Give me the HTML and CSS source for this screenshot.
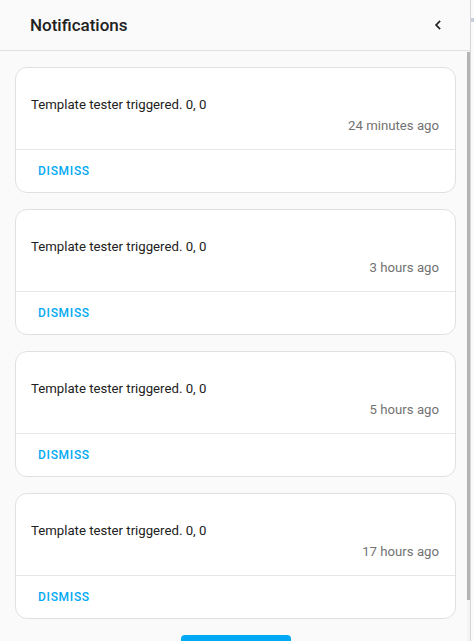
FILE: index.html
```html
<!DOCTYPE html>
<html lang="en">
<head>
<meta charset="utf-8">
<title>Notifications</title>
<link rel="stylesheet" href="styles.css">
</head>
<body>
<div class="drawer">
  <div class="header">
    <div class="title">Notifications</div>
    <button class="close" aria-label="Close">
      <svg viewBox="0 0 24 24" width="18" height="18"><path d="M15.41,16.58L10.83,12L15.41,7.41L14,6L8,12L14,18L15.41,16.58Z" fill="#212121" stroke="#212121" stroke-width="0.4"/></svg>
    </button>
  </div>
  <div class="main">
    <div class="list">
      <div class="card">
        <div class="content">
          <div class="message">Template tester triggered. 0, 0</div>
          <div class="time">24 minutes ago</div>
        </div>
        <div class="actions"><span class="dismiss">DISMISS</span></div>
      </div>
      <div class="card">
        <div class="content">
          <div class="message">Template tester triggered. 0, 0</div>
          <div class="time">3 hours ago</div>
        </div>
        <div class="actions"><span class="dismiss">DISMISS</span></div>
      </div>
      <div class="card">
        <div class="content">
          <div class="message">Template tester triggered. 0, 0</div>
          <div class="time">5 hours ago</div>
        </div>
        <div class="actions"><span class="dismiss">DISMISS</span></div>
      </div>
      <div class="card">
        <div class="content">
          <div class="message">Template tester triggered. 0, 0</div>
          <div class="time">17 hours ago</div>
        </div>
        <div class="actions"><span class="dismiss">DISMISS</span></div>
      </div>
      <div class="footer"><span class="dismiss-all"></span></div>
    </div>
    <div class="scrollbar"><div class="thumb"></div></div>
  </div>
</div>
<div class="outside"><div class="mark"></div></div>
</body>
</html>
```

FILE: styles.css
```css
html, body {
  margin: 0;
  padding: 0;
  height: 641px;
  overflow: hidden;
}
body {
  display: flex;
  font-family: Roboto, "Noto Sans", sans-serif;
  background: #ffffff;
}
.drawer {
  width: 470px;
  height: 641px;
  flex: none;
  display: flex;
  flex-direction: column;
  background: #fafafa;
  border-right: 1px solid #d6d6d6;
}
.header {
  flex: none;
  display: flex;
  align-items: center;
  justify-content: space-between;
  padding: 0 23px 1px 30px;
  border-bottom: 1px solid #e2e2e2;
  box-sizing: border-box;
  height: 51px;
}
.title {
  font-size: 17px;
  font-weight: 500;
  color: #212121;
}
.close {
  border: 0;
  background: none;
  padding: 0;
  width: 18px;
  height: 18px;
  display: flex;
}
.main {
  flex: 1;
  display: flex;
  min-height: 0;
  overflow: hidden;
}
.list {
  flex: 1;
  padding: 16px 11px 0 15px;
  display: flex;
  flex-direction: column;
  gap: 16px;
}
.card {
  flex: none;
  background: #ffffff;
  border: 1px solid #e0e0e0;
  border-radius: 12px;
}
.content {
  padding: 27px 16px 13px 15px;
  border-bottom: 1px solid #e6e6e6;
  font-size: 13.2px;
  line-height: 20px;
}
.message {
  color: #212121;
}
.time {
  margin-top: 1px;
  text-align: right;
  color: #727272;
}
.actions {
  height: 42px;
  display: flex;
  align-items: center;
  padding-left: 22px;
}
.dismiss {
  font-size: 12px;
  font-weight: 500;
  letter-spacing: 0.7px;
  color: #03a9f4;
}
.footer {
  display: flex;
  justify-content: center;
}
.dismiss-all {
  display: block;
  width: 110px;
  height: 36px;
  background: #03a9f4;
  border-radius: 4px;
}
.scrollbar {
  width: 3px;
  flex: none;
  background: #f4f4f4;
}
.thumb {
  height: 548px;
  margin-top: 1px;
  background: #b4b4b4;
}
.outside {
  flex: 1;
  background: #fbfbfb;
}
.mark {
  margin-top: 18px;
  height: 4px;
  background: #c7d0da;
}
```
